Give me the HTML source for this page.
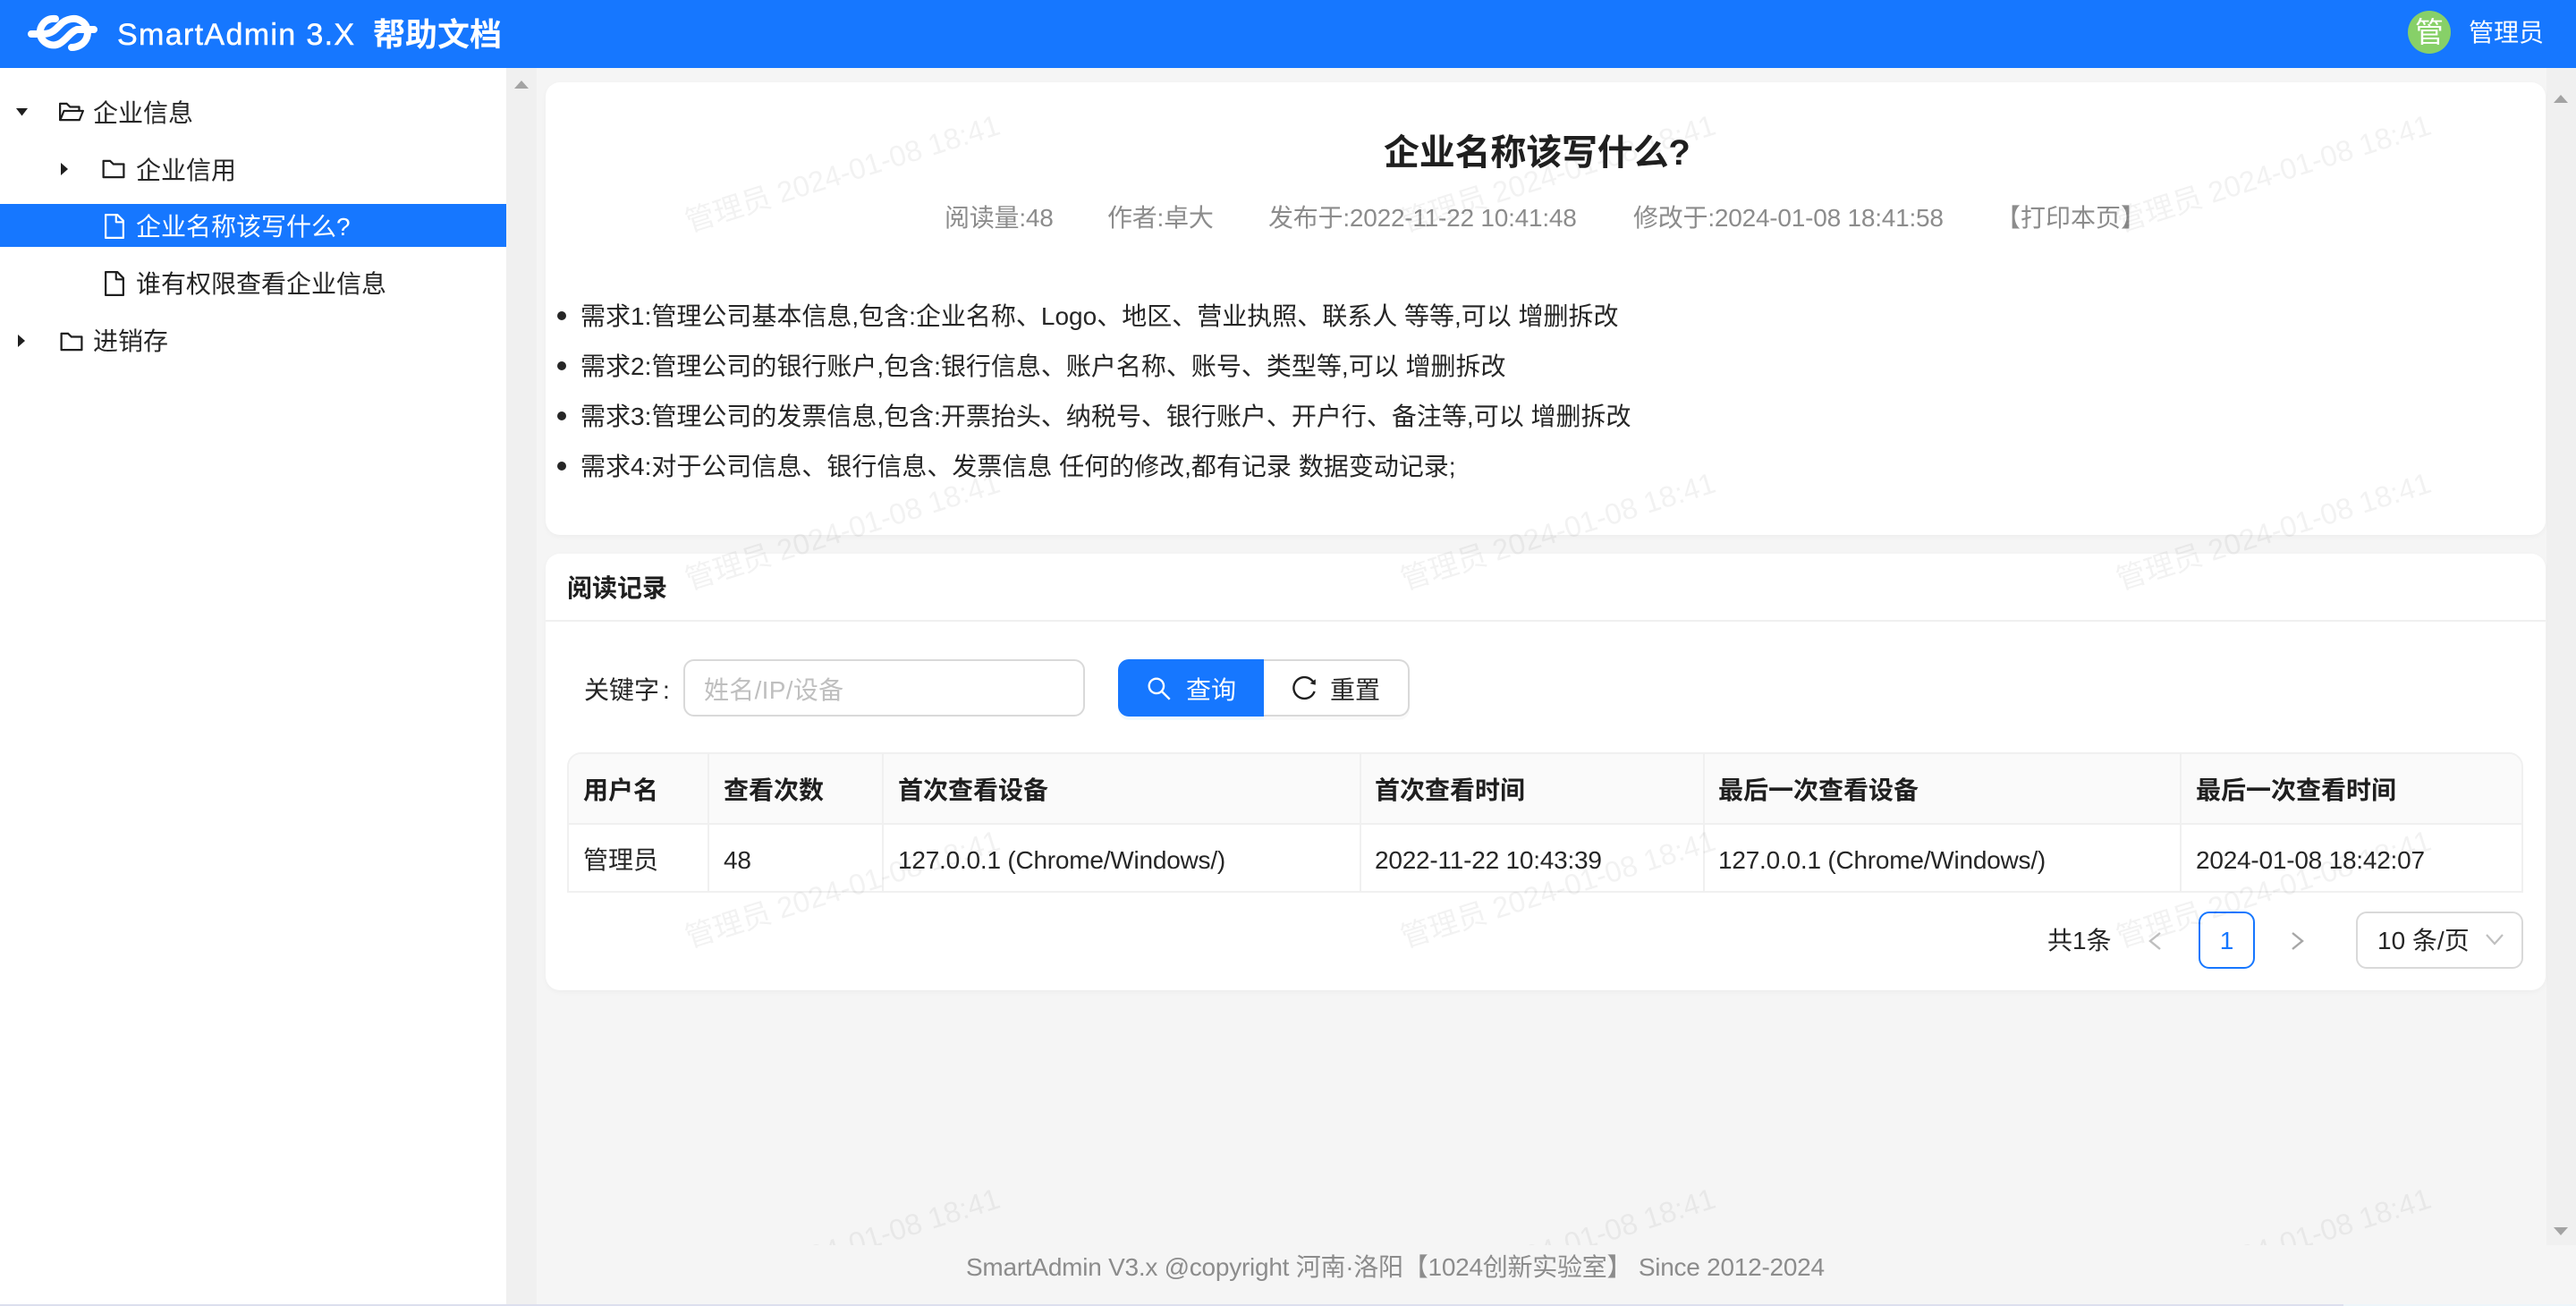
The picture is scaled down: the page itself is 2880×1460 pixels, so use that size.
<!DOCTYPE html>
<html lang="zh-CN"><head><meta charset="utf-8"><title>SmartAdmin 3.X 帮助文档</title>
<style>
html,body{margin:0;padding:0;width:2880px;height:1460px;overflow:hidden;background:#f5f5f5;font-family:"Liberation Sans","Noto Sans CJK SC",sans-serif;font-size:28px;color:#262626}
*{box-sizing:border-box}
.a{position:absolute}
.t{position:absolute;white-space:nowrap;line-height:40px;height:40px}
svg{position:absolute;display:block}
.card{position:absolute;background:#fff;border-radius:16px;box-shadow:0 2px 6px rgba(0,0,0,.035)}
.m{color:#8c8c8c}
.b{font-weight:700;color:#1f1f1f}
.n{letter-spacing:-.22px}
.w{position:absolute;white-space:nowrap;font-size:32.8px;line-height:40px;color:rgba(0,0,0,.05);transform:translate(-50%,-50%) rotate(-17.5deg)}
.v{position:absolute;top:921px;height:76px;width:2px;background:#f0f0f0}
.vh{position:absolute;top:841px;height:80px;width:2px;background:#f0f0f0}
</style></head><body>

<!-- header -->
<div class="a" style="left:0;top:0;width:2880px;height:76px;background:#1677ff"></div>
<svg style="left:0;top:0" width="140" height="76" viewBox="0 0 140 76" fill="none" stroke="#fff" stroke-width="8" stroke-linecap="round" stroke-linejoin="round">
<path d="M62 21C50 20 44 30 45 38C46 48 58 53 66 49C74 45 78 36 86 33L105 33"/>
<path d="M35 38L48 38C58 38 62 33 68 27C74 21 84 19 90 23C98 27 99 36 97 42C94 50 86 53 80 53"/>
</svg>
<div class="t" style="left:131px;top:19px;font-size:34px;color:#fff;letter-spacing:1.35px;-webkit-text-stroke:.5px #fff">SmartAdmin 3.X</div>
<div class="t" style="left:417px;top:19px;font-size:36px;color:#fff;font-weight:700">帮助文档</div>
<div class="a" style="left:2692px;top:12px;width:48px;height:48px;border-radius:50%;background:#87d068;color:#fff;font-size:32px;line-height:48px;text-align:center">管</div>
<div class="t" style="left:2760px;top:17px;color:#fff">管理员</div>

<!-- sidebar -->
<div class="a" style="left:0;top:76px;width:566px;height:1384px;background:#fff"></div>
<div class="a" style="left:566px;top:76px;width:34px;height:1384px;background:#f0f0f0"></div>
<svg style="left:575px;top:90px" width="16" height="9"><path d="M8 0L16 9H0Z" fill="#a3a3a3"/></svg>
<div class="a" style="left:0;top:228px;width:566px;height:48px;background:#1677ff"></div>

<svg style="left:17px;top:120px" width="15" height="10"><path d="M1 1H14L7.5 9.5Z" fill="#1f1f1f"/></svg>
<svg style="left:66px;top:111px" width="28" height="28" viewBox="64 64 896 896" fill="#1f1f1f"><path d="M928 444H820V330.4c0-17.7-14.3-32-32-32H473L355.7 186.2a8.15 8.15 0 00-5.5-2.2H96c-17.7 0-32 14.3-32 32v592c0 17.7 14.3 32 32 32h698c13 0 24.8-7.9 29.7-20l134-332c1.5-3.8 2.3-7.9 2.3-12 0-17.7-14.3-32-32-32zM136 256h188.5l119.6 114.4H748V444H238c-13 0-24.8 7.9-29.7 20L136 643.2V256zm635.3 512H159l103.3-256h612.4L771.3 768z"/></svg>
<div class="t" style="left:104px;top:107px">企业信息</div>

<svg style="left:67px;top:181px" width="10" height="16"><path d="M1 1L9 8L1 15Z" fill="#1f1f1f"/></svg>
<svg style="left:113px;top:175px" width="28" height="28" viewBox="64 64 896 896" fill="#1f1f1f"><path d="M880 298.4H521L403.7 186.2a8.15 8.15 0 00-5.5-2.2H144c-17.7 0-32 14.3-32 32v592c0 17.7 14.3 32 32 32h736c17.7 0 32-14.3 32-32V330.4c0-17.7-14.3-32-32-32zM840 768H184V256h188.5l119.6 114.4H840V768z"/></svg>
<div class="t" style="left:152px;top:171px">企业信用</div>

<svg style="left:114px;top:239px" width="28" height="28" viewBox="64 64 896 896" fill="#fff"><path d="M854.6 288.6L639.4 73.4c-6-6-14.1-9.4-22.6-9.4H192c-17.7 0-32 14.3-32 32v832c0 17.7 14.3 32 32 32h640c17.7 0 32-14.3 32-32V311.3c0-8.5-3.4-16.7-9.4-22.7zM790.2 326H602V137.8L790.2 326zm1.8 562H232V136h302v216a42 42 0 0042 42h216v494z"/></svg>
<div class="t" style="left:152px;top:234px;color:#fff">企业名称该写什么?</div>

<svg style="left:114px;top:303px" width="28" height="28" viewBox="64 64 896 896" fill="#1f1f1f"><path d="M854.6 288.6L639.4 73.4c-6-6-14.1-9.4-22.6-9.4H192c-17.7 0-32 14.3-32 32v832c0 17.7 14.3 32 32 32h640c17.7 0 32-14.3 32-32V311.3c0-8.5-3.4-16.7-9.4-22.7zM790.2 326H602V137.8L790.2 326zm1.8 562H232V136h302v216a42 42 0 0042 42h216v494z"/></svg>
<div class="t" style="left:152px;top:298px">谁有权限查看企业信息</div>

<svg style="left:19px;top:373px" width="10" height="16"><path d="M1 1L9 8L1 15Z" fill="#1f1f1f"/></svg>
<svg style="left:66px;top:368px" width="28" height="28" viewBox="64 64 896 896" fill="#1f1f1f"><path d="M880 298.4H521L403.7 186.2a8.15 8.15 0 00-5.5-2.2H144c-17.7 0-32 14.3-32 32v592c0 17.7 14.3 32 32 32h736c17.7 0 32-14.3 32-32V330.4c0-17.7-14.3-32-32-32zM840 768H184V256h188.5l119.6 114.4H840V768z"/></svg>
<div class="t" style="left:104px;top:362px">进销存</div>

<!-- right scrollbar -->
<div class="a" style="left:2847px;top:76px;width:33px;height:1316px;background:#f0f0f0"></div>
<svg style="left:2855px;top:106px" width="16" height="9"><path d="M8 0L16 9H0Z" fill="#a3a3a3"/></svg>
<svg style="left:2855px;top:1372px" width="16" height="9"><path d="M0 0H16L8 9Z" fill="#a3a3a3"/></svg>

<!-- article card -->
<div class="card" style="left:610px;top:92px;width:2236px;height:506px"></div>
<div class="t b" style="left:1547px;top:151px;font-size:40px;line-height:40px;letter-spacing:-.2px">企业名称该写什么?</div>
<div class="t m n" style="left:1056px;top:224px">阅读量:48</div>
<div class="t m n" style="left:1238px;top:224px">作者:卓大</div>
<div class="t m n" style="left:1418px;top:224px">发布于:2022-11-22 10:41:48</div>
<div class="t m n" style="left:1826px;top:224px">修改于:2024-01-08 18:41:58</div>
<div class="t m" style="left:2231px;top:224px">【打印本页】</div>

<div class="a" style="left:623px;top:348px;width:10px;height:10px;border-radius:50%;background:#262626"></div>
<div class="a" style="left:623px;top:404px;width:10px;height:10px;border-radius:50%;background:#262626"></div>
<div class="a" style="left:623px;top:460px;width:10px;height:10px;border-radius:50%;background:#262626"></div>
<div class="a" style="left:623px;top:516px;width:10px;height:10px;border-radius:50%;background:#262626"></div>
<div class="t" style="left:649px;top:334px">需求1:管理公司基本信息,包含:企业名称、Logo、地区、营业执照、联系人 等等,可以 增删拆改</div>
<div class="t" style="left:649px;top:390px">需求2:管理公司的银行账户,包含:银行信息、账户名称、账号、类型等,可以 增删拆改</div>
<div class="t" style="left:649px;top:446px">需求3:管理公司的发票信息,包含:开票抬头、纳税号、银行账户、开户行、备注等,可以 增删拆改</div>
<div class="t" style="left:649px;top:502px">需求4:对于公司信息、银行信息、发票信息 任何的修改,都有记录 数据变动记录;</div>

<!-- record card -->
<div class="card" style="left:610px;top:619px;width:2236px;height:488px"></div>
<div class="t b" style="left:634px;top:638px">阅读记录</div>
<div class="a" style="left:610px;top:693px;width:2236px;height:2px;background:#f0f0f0"></div>

<div class="t" style="left:653px;top:752px">关键字<span style="margin-left:4px">:</span></div>
<div class="a" style="left:764px;top:737px;width:449px;height:64px;border:2px solid #d9d9d9;border-radius:12px;background:#fff"></div>
<div class="t" style="left:787px;top:752px;color:#bfbfbf;letter-spacing:.3px">姓名/IP/设备</div>

<div class="a" style="left:1250px;top:737px;width:163px;height:64px;background:#1677ff;border-radius:12px 0 0 12px;box-shadow:0 4px 0 rgba(5,145,255,.06)"></div>
<svg style="left:1281.5px;top:755.5px" width="28" height="28" viewBox="64 64 896 896" fill="#fff"><path d="M909.6 854.5L649.9 594.8C690.2 542.7 712 479 712 412c0-80.2-31.3-155.4-87.9-212.1-56.6-56.7-132-87.9-212.1-87.9s-155.5 31.3-212.1 87.9C143.2 256.5 112 331.8 112 412c0 80.1 31.3 155.5 87.9 212.1C256.5 680.8 331.8 712 412 712c67 0 130.6-21.8 182.7-62l259.7 259.6a8.2 8.2 0 0011.6 0l43.6-43.5a8.2 8.2 0 000-11.6zM570.4 570.4C528 612.7 471.8 636 412 636s-116-23.3-158.4-65.6C211.3 528 188 471.8 188 412s23.3-116.1 65.6-158.4C296 211.3 352.2 188 412 188s116.1 23.2 158.4 65.6S636 352.2 636 412s-23.3 116.1-65.6 158.4z"/></svg>
<div class="t" style="left:1326px;top:752px;color:#fff">查询</div>

<div class="a" style="left:1413px;top:737px;width:163px;height:64px;background:#fff;border:2px solid #d9d9d9;border-left:0;border-radius:0 12px 12px 0;box-shadow:0 4px 0 rgba(0,0,0,.02)"></div>
<svg style="left:1444px;top:755px" width="28" height="28" viewBox="64 64 896 896" fill="#1f1f1f"><path d="M909.1 209.3l-56.4 44.1C775.8 155.1 656.2 92 521.9 92 290 92 102.3 279.5 102 511.5 101.7 743.7 289.8 932 521.9 932c181.3 0 335.8-115 394.6-276.1 1.5-4.2-.7-8.9-4.9-10.3l-56.7-19.5a8 8 0 00-10.1 4.8c-1.8 5-3.8 10-5.9 14.9-17.3 41-42.1 77.8-73.7 109.4A344.77 344.77 0 01655.9 829c-42.3 17.9-87.4 27-133.8 27-46.5 0-91.5-9.1-133.8-27A341.5 341.5 0 01279 755.2a342.16 342.16 0 01-73.7-109.4c-17.9-42.4-27-87.4-27-133.9s9.1-91.5 27-133.9c17.3-41 42.1-77.8 73.7-109.4 31.6-31.6 68.4-56.4 109.3-73.8 42.3-17.9 87.4-27 133.8-27 46.5 0 91.5 9.1 133.8 27a341.5 341.5 0 01109.3 73.8c9.9 9.9 19.2 20.4 27.8 31.4l-60.2 47a8 8 0 003 14.1l175.6 43c5 1.2 9.9-2.6 9.9-7.7l.8-180.9c-.1-6.6-7.8-10.3-13-6.2z"/></svg>
<div class="t" style="left:1487px;top:752px">重置</div>

<!-- table -->
<div class="a" style="left:634px;top:841px;width:2187px;height:157px;border:2px solid #f0f0f0;border-top-left-radius:16px;border-top-right-radius:16px;background:#fff"></div>
<div class="a" style="left:636px;top:843px;width:2183px;height:77px;background:#fafafa;border-top-left-radius:14px;border-top-right-radius:14px"></div>
<div class="a" style="left:636px;top:920px;width:2183px;height:2px;background:#f0f0f0"></div>
<div class="vh" style="left:791px"></div><div class="vh" style="left:986px"></div><div class="vh" style="left:1520px"></div><div class="vh" style="left:1904px"></div><div class="vh" style="left:2437px"></div>
<div class="v" style="left:791px"></div><div class="v" style="left:986px"></div><div class="v" style="left:1520px"></div><div class="v" style="left:1904px"></div><div class="v" style="left:2437px"></div>

<div class="t b" style="left:652px;top:864px">用户名</div>
<div class="t b" style="left:809px;top:864px">查看次数</div>
<div class="t b" style="left:1004px;top:864px">首次查看设备</div>
<div class="t b" style="left:1537px;top:864px">首次查看时间</div>
<div class="t b" style="left:1921px;top:864px">最后一次查看设备</div>
<div class="t b" style="left:2455px;top:864px">最后一次查看时间</div>

<div class="t" style="left:652px;top:942px">管理员</div>
<div class="t n" style="left:809px;top:942px">48</div>
<div class="t n" style="left:1004px;top:942px">127.0.0.1 (Chrome/Windows/)</div>
<div class="t n" style="left:1537px;top:942px">2022-11-22 10:43:39</div>
<div class="t n" style="left:1921px;top:942px">127.0.0.1 (Chrome/Windows/)</div>
<div class="t n" style="left:2455px;top:942px">2024-01-08 18:42:07</div>

<!-- pagination -->
<div class="t" style="left:2289px;top:1032px">共1条</div>
<svg style="left:2400px;top:1040px" width="18" height="24" fill="none" stroke="#bfbfbf" stroke-width="2.4"><path d="M15 3L4 12L15 21"/></svg>
<div class="a" style="left:2458px;top:1019px;width:63px;height:64px;border:2px solid #1677ff;border-radius:12px;background:#fff;color:#1677ff;line-height:62px;text-align:center;font-weight:500">1</div>
<svg style="left:2560px;top:1040px" width="18" height="24" fill="none" stroke="#a6a6a6" stroke-width="2.4"><path d="M3 3L14 12L3 21"/></svg>
<div class="a" style="left:2634px;top:1019px;width:187px;height:64px;border:2px solid #d9d9d9;border-radius:12px;background:#fff"></div>
<div class="t" style="left:2658px;top:1032px">10 条/页</div>
<svg style="left:2778px;top:1042px" width="22" height="16" fill="none" stroke="#bfbfbf" stroke-width="2.2"><path d="M2 3L11 13L20 3"/></svg>

<!-- footer -->
<div class="t m" style="left:1080px;top:1397px;letter-spacing:-.25px">SmartAdmin V3.x @copyright 河南·洛阳【1024创新实验室】 Since 2012-2024</div>
<div class="a" style="left:0;top:1458px;width:2620px;height:2px;background:#dcdfee"></div>
<div class="a" style="left:2620px;top:1458px;width:260px;height:2px;background:#edf5fa"></div>

<!-- watermark -->
<div class="a" style="left:600px;top:76px;width:2247px;height:1316px;overflow:hidden">
<div class="w" style="left:342px;top:118px">管理员 2024-01-08 18:41</div>
<div class="w" style="left:1142px;top:118px">管理员 2024-01-08 18:41</div>
<div class="w" style="left:1942px;top:118px">管理员 2024-01-08 18:41</div>
<div class="w" style="left:342px;top:518px">管理员 2024-01-08 18:41</div>
<div class="w" style="left:1142px;top:518px">管理员 2024-01-08 18:41</div>
<div class="w" style="left:1942px;top:518px">管理员 2024-01-08 18:41</div>
<div class="w" style="left:342px;top:918px">管理员 2024-01-08 18:41</div>
<div class="w" style="left:1142px;top:918px">管理员 2024-01-08 18:41</div>
<div class="w" style="left:1942px;top:918px">管理员 2024-01-08 18:41</div>
<div class="w" style="left:342px;top:1318px">管理员 2024-01-08 18:41</div>
<div class="w" style="left:1142px;top:1318px">管理员 2024-01-08 18:41</div>
<div class="w" style="left:1942px;top:1318px">管理员 2024-01-08 18:41</div>
</div>
</body></html>
